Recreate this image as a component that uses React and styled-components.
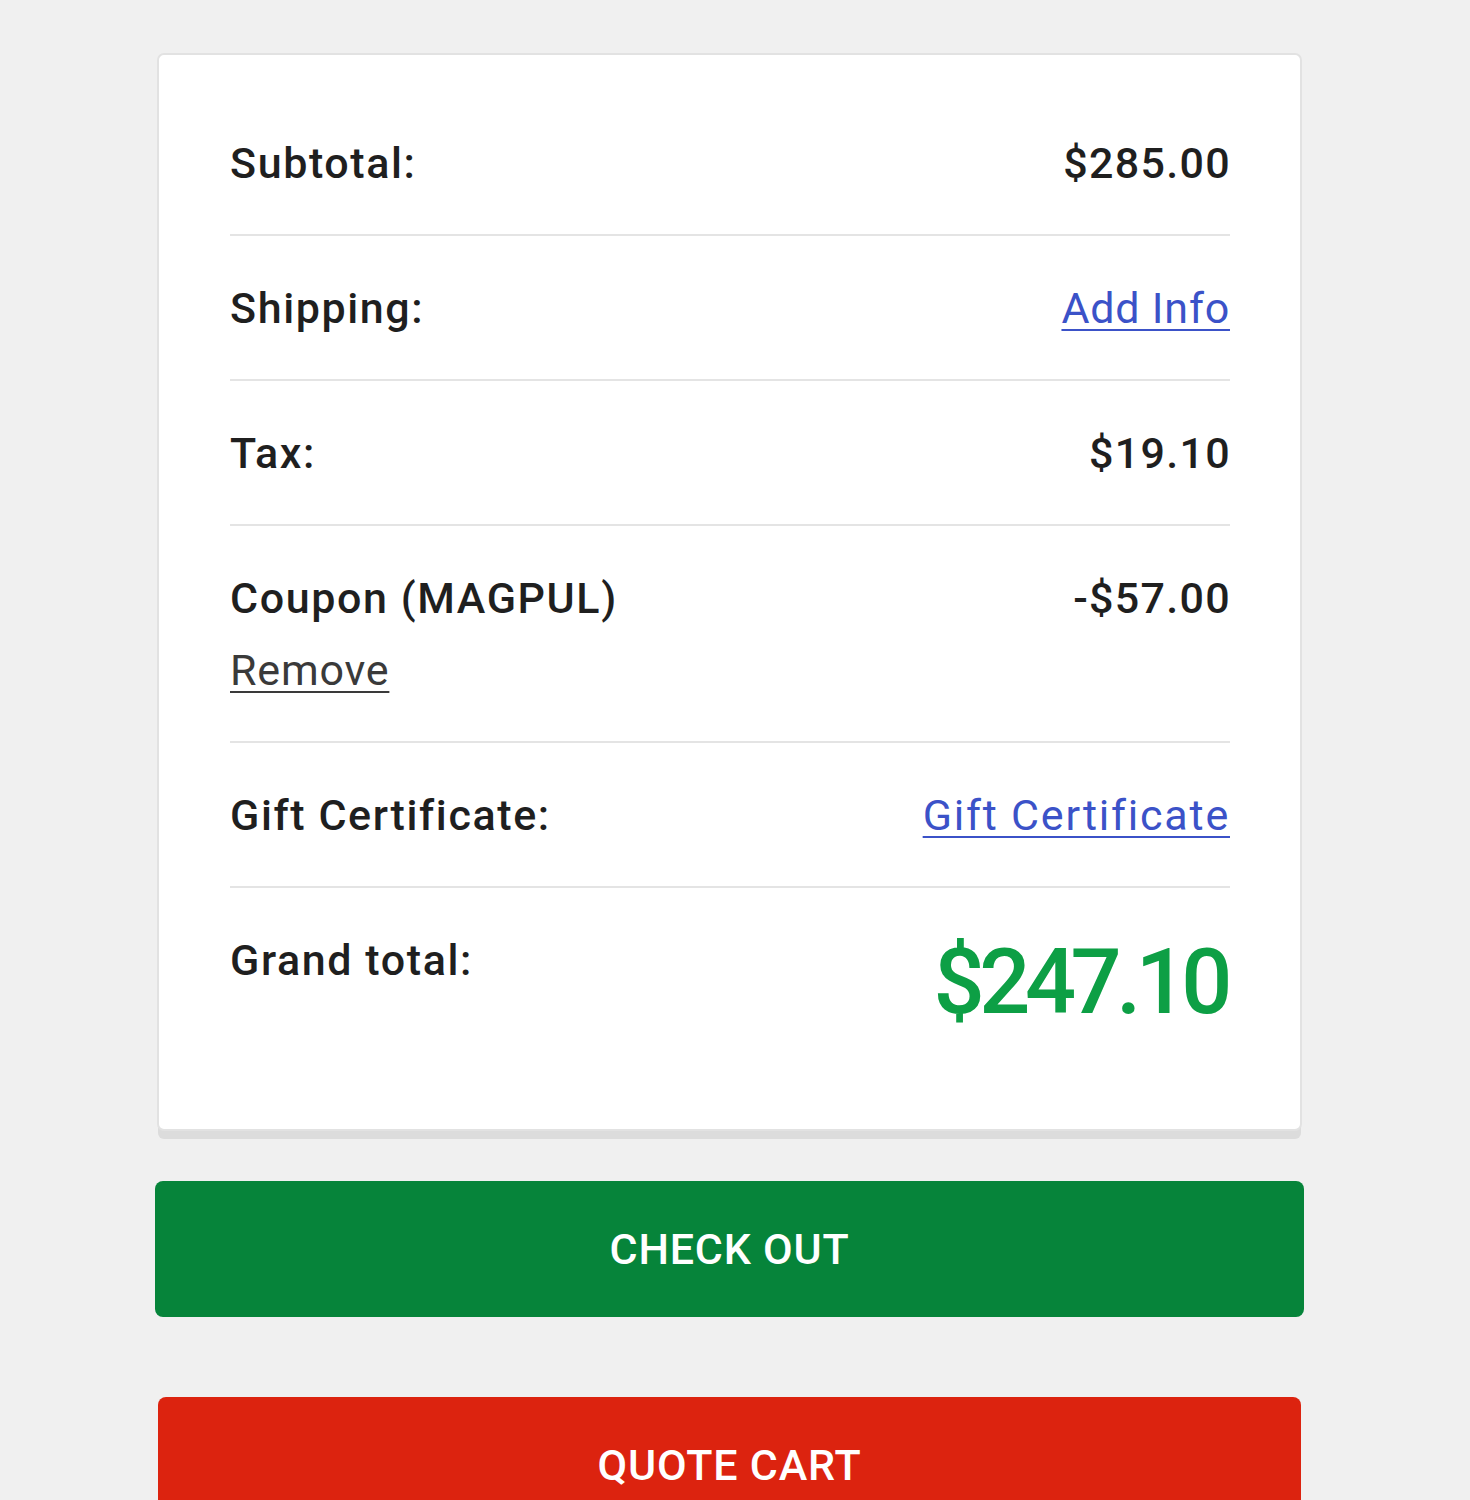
import React from 'react'
import styled, { createGlobalStyle } from 'styled-components'

const GlobalStyle = createGlobalStyle`
  html, body {
    margin: 0;
    padding: 0;
    background: #f0f0f0;
    font-family: Roboto, "Liberation Sans", sans-serif;
    color: #1f1f1f;
  }
`

const Page = styled.div`
  width: 1149px;
  margin: 0 0 0 155px;
  padding-top: 53px;
  display: flex;
  flex-direction: column;
`

const Card = styled.div`
  margin: 0 2px;
  background: #fff;
  border: 2px solid #e2e2e2;
  border-radius: 7px;
  box-shadow: 0 9px 0 -1px #dcdcdc;
  padding: 36px 70px 101px 71px;
`

const Row = styled.div`
  display: flex;
  justify-content: space-between;
  align-items: flex-start;
  padding: 50px 0 49px;
  border-bottom: 2px solid #e4e4e4;

  &:last-child {
    border-bottom: none;
    padding-bottom: 0;
  }
`

const LabelCol = styled.div`
  display: flex;
  flex-direction: column;
  gap: 28px;
`

const Label = styled.span`
  font-size: 43px;
  line-height: 44px;
  font-weight: 500;
  letter-spacing: 1.6px;
`

const Value = styled.span`
  font-size: 43px;
  line-height: 44px;
  font-weight: 500;
  letter-spacing: 1.3px;
  margin-right: -1px;
`

const Link = styled.a`
  font-size: 43px;
  line-height: 44px;
  font-weight: 400;
  letter-spacing: ${p => (p.$wide ? '1.8px' : '0.8px')};
  color: ${p => (p.$muted ? '#3a3a3a' : '#3b52c8')};
  text-decoration: underline;
  text-decoration-thickness: 2px;
  text-underline-offset: 6px;
  cursor: pointer;
`

const Total = styled.span`
  font-size: 90px;
  line-height: 90px;
  font-weight: 500;
  color: #0d9f45;
  letter-spacing: -5.5px;
  margin-right: 3px;
`

const Button = styled.button`
  display: flex;
  align-items: center;
  justify-content: center;
  width: ${p => (p.$inset ? '1143px' : '1149px')};
  margin: ${p => (p.$inset ? '0 3px' : '0')};
  height: 136px;
  border: none;
  border-radius: 8px;
  background: ${p => p.$bg};
  color: #fff;
  font-family: Roboto, "Liberation Sans", sans-serif;
  font-size: 43px;
  font-weight: 500;
  letter-spacing: 0.8px;
  text-transform: uppercase;
  cursor: pointer;
`

const Buttons = styled.div`
  display: flex;
  flex-direction: column;
  gap: 80px;
  margin-top: 50px;
`

export default function App() {
  return (
    <>
      <GlobalStyle />
      <Page>
        <Card>
          <Row>
            <Label>Subtotal:</Label>
            <Value>$285.00</Value>
          </Row>
          <Row>
            <Label>Shipping:</Label>
            <Link>Add Info</Link>
          </Row>
          <Row>
            <Label>Tax:</Label>
            <Value>$19.10</Value>
          </Row>
          <Row>
            <LabelCol>
              <Label>Coupon (MAGPUL)</Label>
              <Link $muted>Remove</Link>
            </LabelCol>
            <Value>-$57.00</Value>
          </Row>
          <Row>
            <Label>Gift Certificate:</Label>
            <Link $wide>Gift Certificate</Link>
          </Row>
          <Row>
            <Label>Grand total:</Label>
            <Total>$247.10</Total>
          </Row>
        </Card>
        <Buttons>
          <Button $bg="#06843a">Check out</Button>
          <Button $bg="#dc230f" $inset>Quote cart</Button>
        </Buttons>
      </Page>
    </>
  )
}
